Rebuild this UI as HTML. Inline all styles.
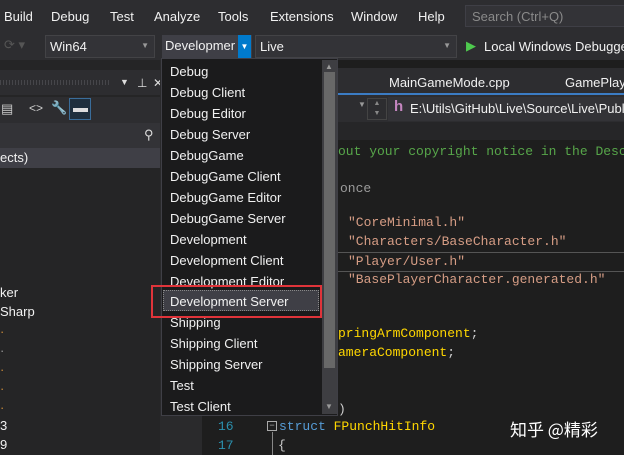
<!DOCTYPE html>
<html><head><style>
*{margin:0;padding:0;box-sizing:border-box}
body{width:624px;height:455px;overflow:hidden;background:#1e1e1e;font-family:"Liberation Sans",sans-serif;color:#f1f1f1;font-size:13px;position:relative}
.a{position:absolute;white-space:nowrap}
.mono{font-family:"Liberation Mono",monospace;font-size:13px}
</style></head><body>
<!-- menu bar -->
<div class="a" style="left:0;top:0;width:624px;height:33px;background:#2d2d30"></div>
<div class="a" style="top:9px;left:4px;font-size:13px">Build</div>
<div class="a" style="top:9px;left:51px">Debug</div>
<div class="a" style="top:9px;left:110px">Test</div>
<div class="a" style="top:9px;left:154px">Analyze</div>
<div class="a" style="top:9px;left:218px">Tools</div>
<div class="a" style="top:9px;left:270px">Extensions</div>
<div class="a" style="top:9px;left:351px">Window</div>
<div class="a" style="top:9px;left:418px">Help</div>
<div class="a" style="top:5px;left:465px;width:165px;height:22px;background:#333337;border:1px solid #3f3f46;color:#8a8a8a;padding:3px 6px">Search (Ctrl+Q)</div>
<!-- toolbar -->
<div class="a" style="left:0;top:33px;width:624px;height:27px;background:#2d2d30"></div>
<div class="a" style="top:37px;left:4px;color:#555">⟳ ▾</div>
<div class="a" style="top:35px;left:45px;width:110px;height:23px;background:#333337;border:1px solid #434346;padding:3px 4px">Win64<span style="position:absolute;right:5px;top:5px;font-size:8px;color:#999">▼</span></div>
<div class="a" style="top:35px;left:162px;width:90px;height:23px;background:#3f3f46;padding:3px 3px">Developmer</div>
<div class="a" style="top:35px;left:238px;width:13px;height:23px;background:#007acc;color:#fff;font-size:8px;text-align:center;padding-top:7px">▼</div>
<div class="a" style="top:35px;left:255px;width:202px;height:23px;background:#333337;border:1px solid #434346;padding:3px 4px">Live<span style="position:absolute;right:5px;top:5px;font-size:8px;color:#999">▼</span></div>
<div class="a" style="top:38px;left:466px;color:#4ec94e;font-size:13px">▶</div>
<div class="a" style="top:39px;left:484px">Local Windows Debugger</div>
<!-- left panel -->
<div class="a" style="left:0;top:60px;width:160px;height:395px;background:#252526"></div>
<div class="a" style="left:0;top:70px;width:160px;height:25px;background:#2d2d30"></div>
<div class="a" style="left:0;top:80px;width:110px;height:5px;background:repeating-linear-gradient(90deg,#46464a 0 1px,transparent 1px 3px)"></div>
<div class="a" style="left:120px;top:77px;font-size:9px;color:#ddd">▼</div>
<div class="a" style="left:137px;top:76px;font-size:12px;color:#ddd">⊥</div>
<div class="a" style="left:153px;top:76px;font-size:12px;color:#ddd">✕</div>
<div class="a" style="left:0;top:97px;width:160px;height:26px;background:#2d2d30"></div>
<div class="a" style="left:1px;top:101px;color:#ccc">▤</div>
<div class="a" style="left:29px;top:101px;color:#ccc;font-size:12px">&lt;&gt;</div>
<div class="a" style="left:51px;top:100px;color:#ccc">🔧</div>
<div class="a" style="left:69px;top:98px;width:22px;height:22px;border:1px solid #3a6d9a;background:#1f2f3d"><div style="margin:9px 0 0 3px;width:15px;height:4px;background:#ddd"></div></div>
<div class="a" style="left:0;top:123px;width:160px;height:25px;background:#333337"></div>
<div class="a" style="left:144px;top:127px;color:#ddd;font-size:13px">⚲</div>
<div class="a" style="left:0;top:148px;width:160px;height:20px;background:#3f3f46"></div>
<div class="a" style="left:0;top:150px">ects)</div>
<div class="a" style="left:0;top:285px">ker</div>
<div class="a" style="left:0;top:304px">Sharp</div>
<div class="a" style="left:0;top:324px;color:#c98a3a">·</div>
<div class="a" style="left:0;top:343px;color:#999">·</div>
<div class="a" style="left:0;top:362px;color:#c98a3a">·</div>
<div class="a" style="left:0;top:381px;color:#c98a3a">·</div>
<div class="a" style="left:0;top:400px;color:#c98a3a">·</div>
<div class="a" style="left:0;top:418px">3</div>
<div class="a" style="left:0;top:437px">9</div>
<!-- editor -->
<div class="a" style="left:160px;top:60px;width:42px;height:395px;background:#2a2a2c"></div>
<div class="a" style="left:338px;top:68px;width:286px;height:26px;background:#2d2d30"></div>
<div class="a" style="left:389px;top:75px">MainGameMode.cpp</div>
<div class="a" style="left:565px;top:75px">GamePlayer</div>
<div class="a" style="left:320px;top:93px;width:304px;height:2px;background:#3b7cc4"></div>
<div class="a" style="left:338px;top:95px;width:286px;height:27px;background:#2d2d30"></div>
<div class="a" style="left:358px;top:100px;font-size:8px;color:#999">▼</div>
<div class="a" style="left:367px;top:98px;width:20px;height:22px;border:1px solid #444;color:#888;font-size:7px;text-align:center;line-height:10px">▲<br>▼</div>
<div class="a" style="left:388px;top:97px;width:236px;height:24px;background:#333337"></div>
<div class="a" style="left:394px;top:98px;color:#c586c0;font-size:15px;font-weight:bold">h</div>
<div class="a" style="left:410px;top:101px">E:\Utils\GitHub\Live\Source\Live\Publ</div>
<div class="a" style="left:338px;top:122px;width:286px;height:18px;background:#262628"></div>
<div class="a mono" style="left:338px;top:144px;color:#57a64a">out your copyright notice in the Desc</div>
<div class="a mono" style="left:340px;top:181px;color:#9b9b9b">once</div>
<div class="a mono" style="left:348px;top:215px;color:#d69d85">"CoreMinimal.h"</div>
<div class="a mono" style="left:348px;top:234px;color:#d69d85">"Characters/BaseCharacter.h"</div>
<div class="a" style="left:338px;top:252px;width:286px;height:1px;background:#555"></div>
<div class="a mono" style="left:348px;top:254px;color:#d69d85">"Player/User.h"</div>
<div class="a" style="left:338px;top:271px;width:286px;height:1px;background:#555"></div>
<div class="a mono" style="left:348px;top:272px;color:#d69d85">"BasePlayerCharacter.generated.h"</div>
<div class="a mono" style="left:338px;top:326px;color:#ffd700">pringArmComponent<span style="color:#ccc">;</span></div>
<div class="a mono" style="left:338px;top:345px;color:#ffd700">ameraComponent<span style="color:#ccc">;</span></div>
<div class="a mono" style="left:338px;top:402px;color:#ccc">)</div>
<div class="a mono" style="left:218px;top:419px;color:#2b91af">16</div>
<div class="a mono" style="left:218px;top:438px;color:#2b91af">17</div>
<div class="a" style="left:267px;top:421px;width:10px;height:10px;border:1px solid #aaa;font-size:9px;line-height:7px;text-align:center;color:#aaa">−</div>
<div class="a mono" style="left:279px;top:419px"><span style="color:#569cd6">struct</span> <span style="color:#ffd700">FPunchHitInfo</span></div>
<div class="a" style="left:272px;top:432px;width:1px;height:23px;background:#888"></div>
<div class="a mono" style="left:278px;top:438px;color:#ccc">{</div>
<div class="a" style="left:510px;top:416px;font-family:'Noto Sans CJK SC',sans-serif;font-size:17px;color:#fff">知乎 @精彩</div>
<!-- dropdown -->
<div class="a" style="left:161px;top:58px;width:177px;height:358px;background:#1b1b1c;border:1px solid #3f3f46"></div>
<div class="a" style="left:322px;top:60px;width:15px;height:354px;background:#3e3e42"></div>
<div class="a" style="left:324px;top:72px;width:11px;height:296px;background:#686868"></div>
<div class="a" style="left:325px;top:62px;font-size:8px;color:#999">▲</div>
<div class="a" style="left:325px;top:402px;font-size:8px;color:#999">▼</div>
<div class="a" style="left:163px;top:290px;width:156px;height:21px;background:#3f3f46;border:1px dotted #888"></div>
<div class="a" style="left:170px;top:62px;line-height:20.95px;font-size:13px">Debug<br>Debug Client<br>Debug Editor<br>Debug Server<br>DebugGame<br>DebugGame Client<br>DebugGame Editor<br>DebugGame Server<br>Development<br>Development Client<br>Development Editor<br>Development Server<br>Shipping<br>Shipping Client<br>Shipping Server<br>Test<br>Test Client</div>
<div class="a" style="left:151px;top:285px;width:171px;height:33px;border:2px solid #e0343a"></div>
</body></html>
